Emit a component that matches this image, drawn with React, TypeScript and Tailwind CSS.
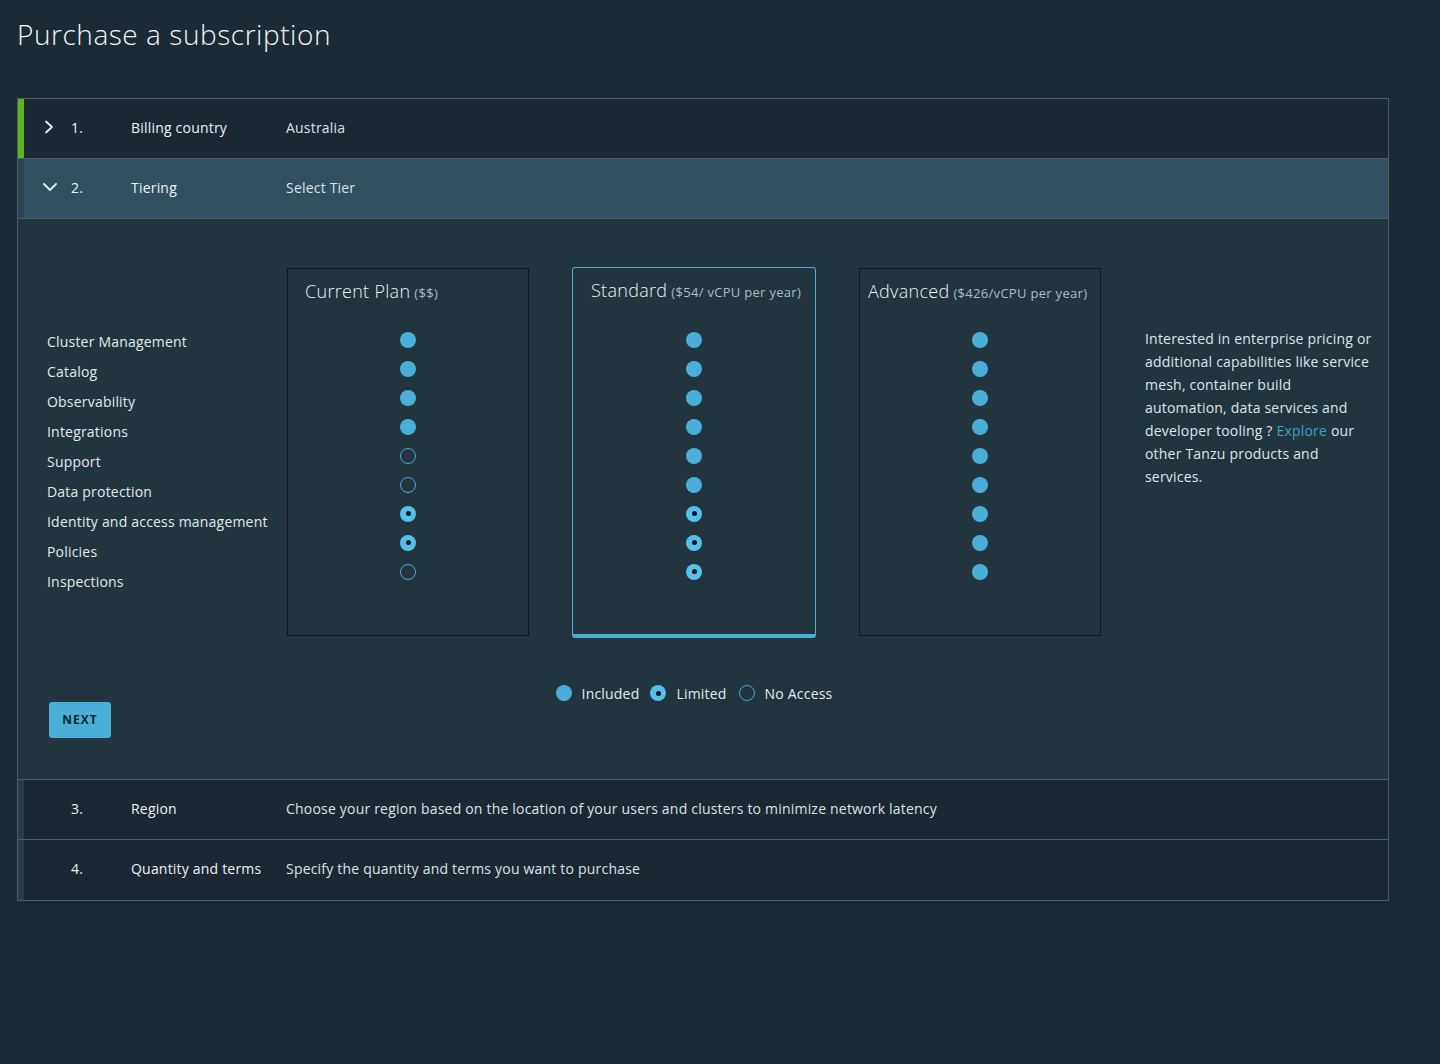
import type React from "react";

type Access = "I" | "L" | "N";

const features = [
  "Cluster Management",
  "Catalog",
  "Observability",
  "Integrations",
  "Support",
  "Data protection",
  "Identity and access management",
  "Policies",
  "Inspections",
];

const plans: {
  name: string;
  price: string;
  access: Access[];
  selected?: boolean;
  pad: string;
}[] = [
  {
    name: "Current Plan",
    price: "($$)",
    access: ["I", "I", "I", "I", "N", "N", "L", "L", "N"],
    pad: "pl-[17px]",
  },
  {
    name: "Standard",
    price: "($54/ vCPU per year)",
    access: ["I", "I", "I", "I", "I", "I", "L", "L", "L"],
    selected: true,
    pad: "pl-[18px]",
  },
  {
    name: "Advanced",
    price: "($426/vCPU per year)",
    access: ["I", "I", "I", "I", "I", "I", "I", "I", "I"],
    pad: "pl-[8px]",
  },
];

const Dot: React.FC<{ kind: Access }> = ({ kind }) => {
  if (kind === "I") {
    return <span className="block w-4 h-4 rounded-full bg-[#49afd9]" />;
  }
  if (kind === "L") {
    return (
      <span className="flex items-center justify-center w-4 h-4 rounded-full bg-[#57c0ea]">
        <span className="block w-[5px] h-[5px] rounded-full bg-[#0f1b23]" />
      </span>
    );
  }
  return (
    <span className="block w-4 h-4 rounded-full border border-[#49afd9]" />
  );
};

const Chevron: React.FC<{ open?: boolean }> = ({ open }) => (
  <svg width="16" height="16" viewBox="0 0 16 16" fill="none">
    <polyline
      points={open ? "3,5 9,11 15,5" : "5,2.5 11,8 5,13.5"}
      stroke="currentColor"
      strokeWidth="1.8"
      strokeLinecap="round"
      strokeLinejoin="round"
    />
  </svg>
);

const StepRow: React.FC<{
  num: string;
  title: string;
  desc: string;
  state: "done" | "open" | "todo";
  last?: boolean;
}> = ({ num, title, desc, state, last }) => {
  const strip =
    state === "done"
      ? "bg-[#5fb61a]"
      : state === "open"
        ? "bg-[#2b4454]"
        : "bg-[#283b48]";
  const bg = state === "open" ? "bg-[#32505f]" : "bg-[#1b2732]";
  return (
    <div
      className={`flex h-[60px] ${last ? "" : "border-b border-[#4b5d69]"} ${bg}`}
    >
      <div className={`w-[6px] ${strip}`} />
      <div className="flex items-center text-[14px] tracking-[0.2px] pb-[3px]">
        <div className="w-[16px] ml-[17px] flex items-center text-[#e8edf0]">
          {state === "done" && <Chevron />}
          {state === "open" && <Chevron open />}
        </div>
        <div className="w-[60px] ml-[14px] font-medium text-[#eef2f4]">
          {num}
        </div>
        <div className="w-[155px] font-medium text-[#eef2f4]">{title}</div>
        <div className="text-[#dce3e7]">{desc}</div>
      </div>
    </div>
  );
};

const PlanCard: React.FC<{ plan: (typeof plans)[number] }> = ({ plan }) => {
  const frame = plan.selected
    ? "w-[244px] h-[371px] -mt-px border border-b-4 border-[#49afd9] rounded-[3px]"
    : "w-[242px] h-[368px] border border-[#0d161c]";
  return (
    <div className={`${frame} bg-[#22343e] shrink-0`}>
      <div
        className={`${plan.pad} pt-[9px] h-[44px] whitespace-nowrap tracking-[0.3px]`}
      >
        <span className="text-[18px] font-light text-[#eef2f4]">
          {plan.name}
        </span>{" "}
        <span className="text-[13px] text-[#aebcc4]">{plan.price}</span>
      </div>
      <div
        className={`${plan.selected ? "mt-[13px]" : "mt-[12px]"} flex flex-col items-center`}
      >
        {plan.access.map((a, i) => (
          <div key={i} className="h-[29px] flex items-center">
            <Dot kind={a} />
          </div>
        ))}
      </div>
    </div>
  );
};

export default function App() {
  return (
    <div
      className="min-h-screen h-[1064px] bg-[#1c2a35] text-[#e6ebee]"
      style={{ fontFamily: "'Open Sans', Lato, sans-serif" }}
    >
      <h1 className="pl-[17px] pt-[15px] text-[28px] font-light leading-[38px] tracking-[0.55px] text-[#f2f5f7]">
        Purchase a subscription
      </h1>

      <div className="mt-[45px] ml-[17px] w-[1372px] border border-[#4b5d69]">
        <StepRow num="1." title="Billing country" desc="Australia" state="done" />
        <StepRow num="2." title="Tiering" desc="Select Tier" state="open" />

        <div className="bg-[#22343e] border-b border-[#4b5d69] pl-[29px] pt-[49px] pb-[41px] text-[14px] tracking-[0.2px]">
          <div className="flex items-start">
            <div className="w-[240px] pt-[59px] text-[#e3e9ec]">
              {features.map((f) => (
                <div key={f} className="h-[30px] leading-[30px] whitespace-nowrap">
                  {f}
                </div>
              ))}
            </div>
            <div className="flex items-start gap-[43px]">
              {plans.map((p) => (
                <PlanCard key={p.name} plan={p} />
              ))}
            </div>
            <div className="ml-[44px] pt-[59px] leading-[23px] text-[#dfe5e9] whitespace-nowrap">
              <div>Interested in enterprise pricing or</div>
              <div>additional capabilities like service</div>
              <div>mesh, container build</div>
              <div>automation, data services and</div>
              <div>
                developer tooling ?{" "}
                <span className="text-[#3f9fc6]">Explore</span> our
              </div>
              <div>other Tanzu products and</div>
              <div>services.</div>
            </div>
          </div>

          <div className="flex">
            <div className="w-[240px]" />
            <div className="w-[814px] h-4 mt-[47px] flex items-center justify-center text-[#e3e9ec]">
              <Dot kind="I" />
              <span className="ml-[10px] mr-[11px]">Included</span>
              <Dot kind="L" />
              <span className="ml-[10px] mr-[12px]">Limited</span>
              <Dot kind="N" />
              <span className="ml-[10px]">No Access</span>
            </div>
          </div>

          <button className="mt-px ml-[2px] w-[62px] h-[36px] rounded-[3px] bg-[#49afd9] text-[12px] font-bold tracking-[1px] text-[#12232d]">
            NEXT
          </button>
        </div>

        <StepRow
          num="3."
          title="Region"
          desc="Choose your region based on the location of your users and clusters to minimize network latency"
          state="todo"
        />
        <StepRow
          num="4."
          title="Quantity and terms"
          desc="Specify the quantity and terms you want to purchase"
          state="todo"
          last
        />
      </div>
    </div>
  );
}
